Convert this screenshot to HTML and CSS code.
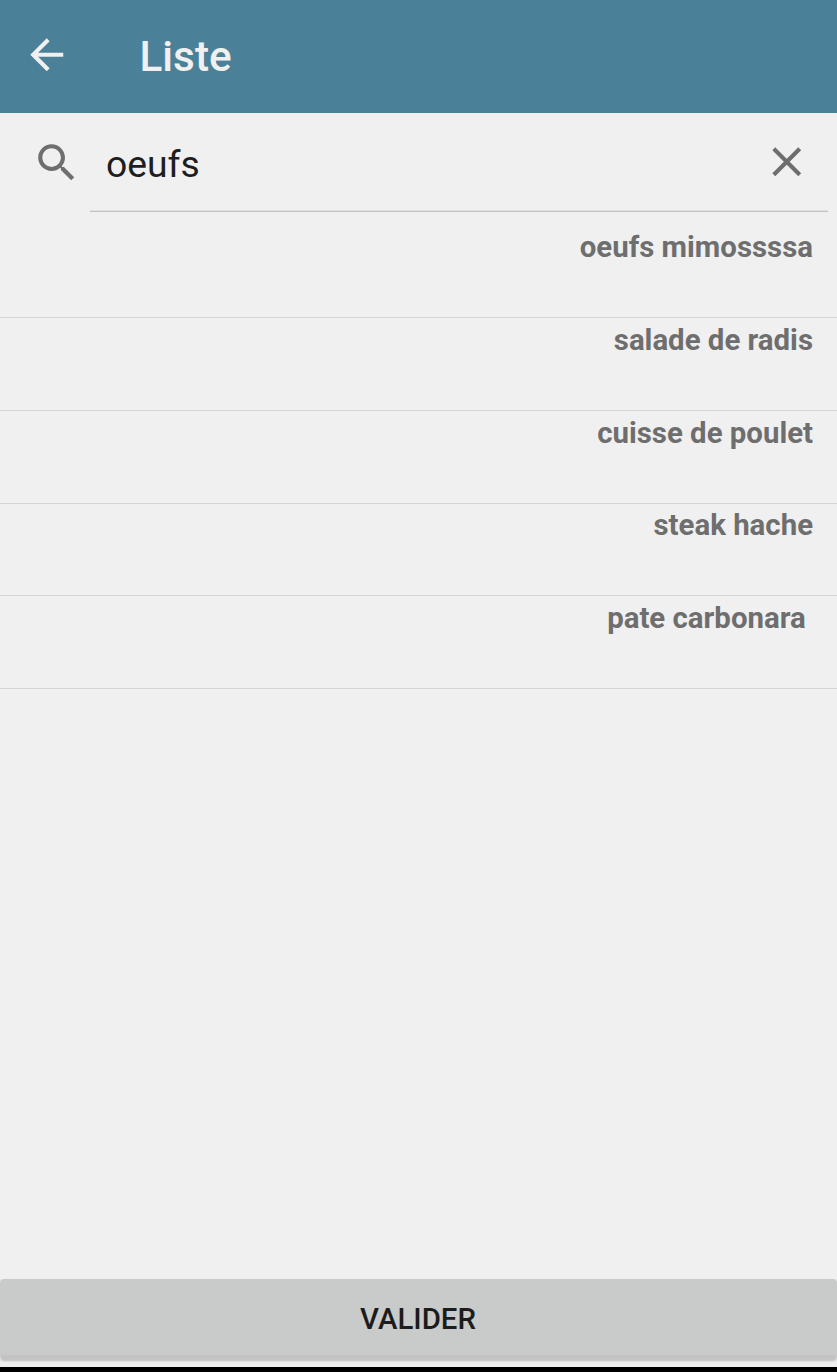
FILE: index.html
```html
<!DOCTYPE html>
<html lang="fr">
<head>
  <meta charset="UTF-8" />
  <meta name="viewport" content="width=device-width, initial-scale=1" />
  <title>Liste</title>
  <link rel="stylesheet" href="styles.css">
</head>
<body>
  <header class="toolbar">
    <svg class="icon icon-back" viewBox="0 0 24 24"><path d="M20 11H7.83l5.59-5.59L12 4l-8 8 8 8 1.41-1.41L7.83 13H20v-2z"/></svg>
    <h1>Liste</h1>
  </header>

  <div class="search">
    <svg class="icon icon-search" viewBox="0 0 24 24"><path d="M15.5 14h-.79l-.28-.27C15.41 12.59 16 11.11 16 9.5 16 5.91 13.09 3 9.5 3S3 5.91 3 9.5 5.91 16 9.5 16c1.61 0 3.09-.59 4.23-1.57l.27.28v.79l5 4.99L20.49 19l-4.99-5zm-6 0C7.01 14 5 11.99 5 9.5S7.01 5 9.5 5 14 7.01 14 9.5 11.99 14 9.5 14z"/></svg>
    <div class="search-field">
      <span class="search-text">oeufs</span>
      <svg class="icon icon-close" viewBox="0 0 24 24"><path d="M19 6.41L17.59 5 12 10.59 6.41 5 5 6.41 10.59 12 5 17.59 6.41 19 12 13.41 17.59 19 19 17.59 13.41 12z"/></svg>
    </div>
  </div>

  <ul class="list">
    <li>oeufs mimossssa</li>
    <li>salade de radis</li>
    <li>cuisse de poulet</li>
    <li>steak hache</li>
    <li>pate carbonara </li>
  </ul>

  <button class="valider">VALIDER</button>
  <div class="navbar"></div>
</body>
</html>
```
FILE: styles.css
```css
* {
  box-sizing: border-box;
}
body {
  display: flex;
  flex-direction: column;
  height: 1372px;
  margin: 0;
  overflow: hidden;
  background: #f0f0f0;
  font-family: Roboto, sans-serif;
  color: #6e6e6e;
}
.icon {
  display: block;
  flex: none;
  width: 49.5px;
  height: 49.5px;
  fill: #6e6e6e;
}
.toolbar {
  display: flex;
  align-items: center;
  height: 113px;
  padding: 0 21.5px;
  background: #4a8198;
}
.icon-back {
  margin-bottom: 3px;
  fill: #f0f0f0;
}
.toolbar h1 {
  margin: 0 0 0 68.5px;
  padding-top: 1px;
  font-size: 42.3px;
  font-weight: 500;
  line-height: 48px;
  color: #f0f0f0;
}
.search {
  display: flex;
  height: 99px;
  padding: 0 9px 0 32px;
}
.icon-search {
  margin-top: 24.5px;
}
.search-field {
  display: flex;
  flex: 1;
  justify-content: space-between;
  margin-left: 8.5px;
  padding: 24px 16.5px 0 16px;
  border-bottom: 1px solid #c2c2c2;
  box-shadow: inset 0 -1px #e0e0e0;
}
.search-text {
  padding-top: 1px;
  font-size: 37.3px;
  line-height: 52px;
  color: #1e1e1e;
}
.list {
  flex: 1;
  margin: 0;
  padding: 13.8px 0 0;
  list-style: none;
}
.list li {
  height: 92.6px;
  padding: 4.6px 24px 0 0;
  border-bottom: 1px solid #d5d5d5;
  font-size: 29.4px;
  font-weight: 700;
  line-height: 34px;
  text-align: right;
  white-space: break-spaces;
}
.valider {
  height: 76px;
  margin: 0 0 12px;
  padding: 3px 1px 0 0;
  border: 0;
  border-radius: 4px;
  background: #c9cbca;
  box-shadow: 0 6px 2px #c3c3c3, 0 3px 5px rgba(0, 0, 0, 0.12);
  font-family: inherit;
  font-size: 29.4px;
  font-weight: 500;
  color: #1c1c1c;
}
.navbar {
  height: 5px;
  background: #000;
}
```
